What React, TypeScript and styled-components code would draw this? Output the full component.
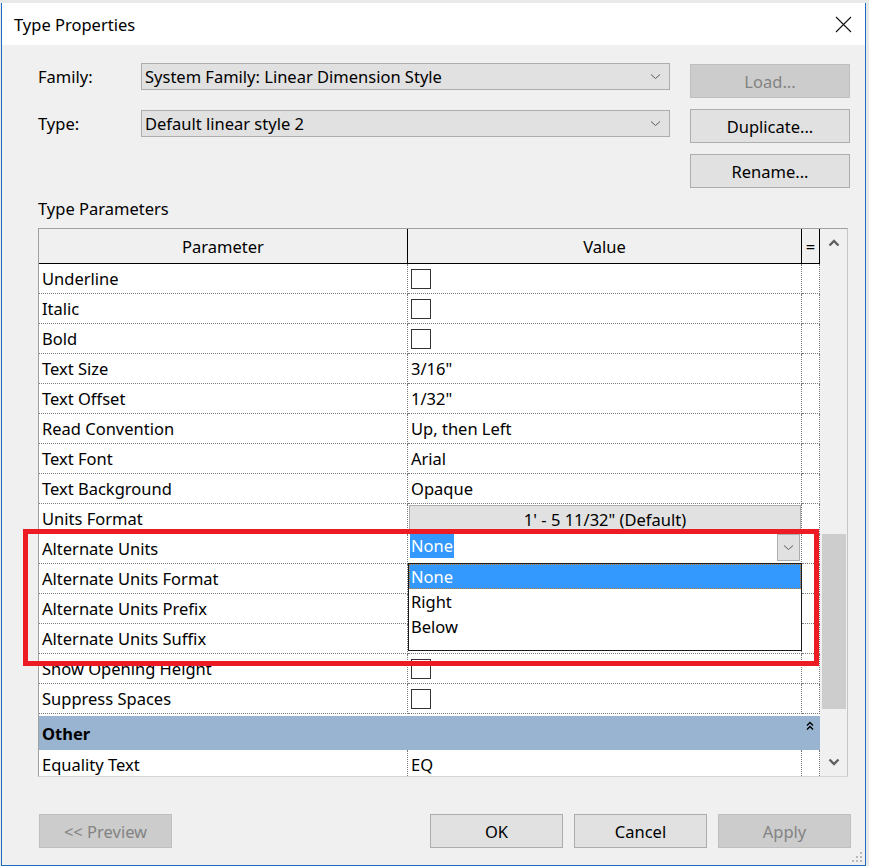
import React from "react";
import styled, { createGlobalStyle, css } from "styled-components";

const GlobalStyle = createGlobalStyle`
  html, body { margin: 0; padding: 0; background: #e9e9e9; }
  body { font-family: "Noto Sans", "Open Sans", sans-serif; font-size: 16.5px; color: #000; }
  * { box-sizing: border-box; }
`;

const Window = styled.div`
  position: relative;
  width: 865px;
  height: 863px;
  margin: 3px 0 0 1px;
  border: 1px solid #1f6dc2;
  border-top: none;
  background: #f0f0f0;
  display: flex;
  flex-direction: column;
`;

const TitleBar = styled.div`
  height: 42px;
  background: #fff;
  display: flex;
  align-items: center;
  justify-content: space-between;
  padding: 0 13px 0 12px;
`;

const Title = styled.span`
  font-size: 16.5px;
`;

const Body = styled.div`
  flex: 1;
  padding: 18px 14px 0 36px;
  display: flex;
  flex-direction: column;
`;

const TopArea = styled.div`
  display: flex;
  height: 125px;
`;

const LeftForm = styled.div`
  width: 632px;
  display: flex;
  flex-direction: column;
  gap: 20px;
`;

const FieldRow = styled.div`
  display: flex;
  align-items: center;
  height: 27px;
`;

const FieldLabel = styled.span`
  width: 103px;
`;

const Select = styled.div`
  width: 529px;
  height: 27px;
  border: 1px solid #adadad;
  background: #e1e1e1;
  display: flex;
  align-items: center;
  justify-content: space-between;
  padding: 0 8px 0 3px;
`;

const ButtonColumn = styled.div`
  margin-left: 20px;
  width: 160px;
  padding-top: 1px;
  display: flex;
  flex-direction: column;
  gap: 11px;
`;

const DialogButton = styled.div<{ $w: number; $disabled?: boolean }>`
  width: ${(p) => p.$w}px;
  height: 34px;
  border: 1px solid #adadad;
  background: #e1e1e1;
  display: flex;
  align-items: center;
  justify-content: center;
  ${(p) =>
    p.$disabled &&
    css`
      background: #cccccc;
      border-color: #bfbfbf;
      color: #838383;
    `}
`;

const SectionLabel = styled.div`
  margin-top: 9px;
  height: 23px;
  line-height: 23px;
`;

const Frame = styled.div`
  margin-top: 8px;
  width: 810px;
  height: 549px;
  border: 1px solid;
  border-color: #a0a0a0 #c6c6c6 #d6d6d6 #a0a0a0;
  display: flex;
`;

const GridArea = styled.div`
  width: 781px;
  display: flex;
  flex-direction: column;
  overflow: hidden;
  background: #fff;
`;

const columns = "369px 394px 18px";

const Header = styled.div`
  display: grid;
  grid-template-columns: ${columns};
  height: 35px;
  border-bottom: 1px solid #000;
  background: #f0f0f0;
`;

const HeaderCell = styled.div`
  border-right: 1px solid #000;
  display: flex;
  align-items: center;
  justify-content: center;
`;

const Rows = styled.div`
  position: relative;
  flex: 1;
  overflow: hidden;
  background: #fff;
`;

const Row = styled.div`
  display: grid;
  grid-template-columns: ${columns};
  height: 30px;
`;

const Cell = styled.div`
  position: relative;
  border-right: 1px dotted #7a7a7a;
  border-bottom: 1px dotted #7a7a7a;
  display: flex;
  align-items: center;
  padding-left: 3px;
  white-space: nowrap;
`;

const Checkbox = styled.div`
  width: 20px;
  height: 20px;
  border: 1px solid #333;
  background: #fff;
`;

const ValueButton = styled.div`
  flex: 1;
  align-self: stretch;
  margin: 1px 0 0 -2px;
  border: 1px solid #adadad;
  background: #e1e1e1;
  display: flex;
  align-items: center;
  justify-content: center;
`;

const ComboCell = styled(Cell)`
  align-items: flex-start;
  padding-left: 2px;
  overflow: visible;
  z-index: 2;
`;

const SelectedText = styled.span`
  height: 24px;
  line-height: 24px;
  padding: 0 1px;
  background: #3399ff;
  color: #fff;
`;

const ComboButton = styled.div`
  position: absolute;
  right: 1px;
  top: 0;
  width: 23px;
  height: 27px;
  border: 1px solid #adadad;
  background: #e1e1e1;
  display: flex;
  align-items: center;
  justify-content: center;
`;

const DropList = styled.div`
  position: absolute;
  left: 0;
  right: -1px;
  top: 100%;
  height: 88px;
  border: 1px solid #1a1a1a;
  background: #fff;
  display: flex;
  flex-direction: column;
`;

const DropItem = styled.div<{ $active?: boolean }>`
  height: 25px;
  display: flex;
  align-items: center;
  padding-left: 1px;
  border: 1px solid transparent;
  ${(p) =>
    p.$active &&
    css`
      background: #3399ff;
      color: #fff;
      border: 1px dotted #c77b2d;
    `}
`;

const GroupRow = styled.div`
  margin-top: 2px;
  height: 34px;
  background: #99b4d1;
  display: flex;
  align-items: center;
  justify-content: space-between;
  padding: 0 6px 0 3px;
  font-weight: bold;
`;

const GroupToggle = styled.svg`
  align-self: flex-start;
  margin-top: 5px;
`;

const Scrollbar = styled.div`
  width: 27px;
  background: #f0f0f0;
  display: flex;
  flex-direction: column;
`;

const ScrollArrow = styled.div`
  height: 28px;
  display: flex;
  align-items: center;
  justify-content: center;
`;

const Track = styled.div`
  flex: 1;
  display: flex;
  flex-direction: column;
`;

const Thumb = styled.div`
  margin: 0 1px 0 2px;
  background: #cdcdcd;
`;

const Footer = styled.div`
  margin-top: 37px;
  padding-left: 1px;
  display: flex;
`;

const FooterGroup = styled.div`
  margin-left: auto;
  display: flex;
  gap: 11px;
`;

const Annotation = styled.div`
  position: absolute;
  left: 21px;
  top: 526px;
  width: 796px;
  height: 137px;
  border: 5px solid #ed1c24;
  pointer-events: none;
`;

const Grip = styled.svg`
  position: absolute;
  right: 1px;
  bottom: 1px;
`;

const Chevron = ({ color = "#5a5a5a" }: { color?: string }) => (
  <svg width="11" height="7" viewBox="0 0 11 7">
    <path d="M1 1.5 L5.5 5.5 L10 1.5" fill="none" stroke={color} strokeWidth="1" />
  </svg>
);

const ScrollChevron = ({ up }: { up?: boolean }) => (
  <svg width="12" height="8" viewBox="0 0 12 8">
    <path
      d={up ? "M1.5 6.5 L6 2 L10.5 6.5" : "M1.5 1.5 L6 6 L10.5 1.5"}
      fill="none"
      stroke="#606060"
      strokeWidth="2.4"
    />
  </svg>
);

type RowData = { name: string; kind?: "check" | "button" | "combo"; value?: string };

const rows: RowData[] = [
  { name: "Underline", kind: "check" },
  { name: "Italic", kind: "check" },
  { name: "Bold", kind: "check" },
  { name: "Text Size", value: '3/16"' },
  { name: "Text Offset", value: '1/32"' },
  { name: "Read Convention", value: "Up, then Left" },
  { name: "Text Font", value: "Arial" },
  { name: "Text Background", value: "Opaque" },
  { name: "Units Format", kind: "button", value: `1' - 5 11/32" (Default)` },
  { name: "Alternate Units", kind: "combo", value: "None" },
  { name: "Alternate Units Format" },
  { name: "Alternate Units Prefix" },
  { name: "Alternate Units Suffix" },
  { name: "Show Opening Height", kind: "check" },
  { name: "Suppress Spaces", kind: "check" },
];

const renderValue = (r: RowData) => {
  if (r.kind === "check") return <Cell><Checkbox /></Cell>;
  if (r.kind === "button")
    return (
      <Cell>
        <ValueButton>{r.value}</ValueButton>
      </Cell>
    );
  if (r.kind === "combo")
    return (
      <ComboCell>
        <SelectedText>{r.value}</SelectedText>
        <ComboButton>
          <Chevron />
        </ComboButton>
        <DropList>
          <DropItem $active>None</DropItem>
          <DropItem>Right</DropItem>
          <DropItem>Below</DropItem>
        </DropList>
      </ComboCell>
    );
  return <Cell>{r.value}</Cell>;
};

const scroll = { offset: 277, size: 175 };

export default function App() {
  return (
    <>
      <GlobalStyle />
      <Window>
        <TitleBar>
          <Title>Type Properties</Title>
          <svg width="17" height="17" viewBox="0 0 17 17">
            <path d="M1 1 L16 16 M16 1 L1 16" stroke="#111" strokeWidth="1.1" />
          </svg>
        </TitleBar>
        <Body>
          <TopArea>
            <LeftForm>
              <FieldRow>
                <FieldLabel>Family:</FieldLabel>
                <Select>
                  <span>System Family: Linear Dimension Style</span>
                  <Chevron />
                </Select>
              </FieldRow>
              <FieldRow>
                <FieldLabel>Type:</FieldLabel>
                <Select>
                  <span>Default linear style 2</span>
                  <Chevron />
                </Select>
              </FieldRow>
            </LeftForm>
            <ButtonColumn>
              <DialogButton $w={160} $disabled>Load...</DialogButton>
              <DialogButton $w={160}>Duplicate...</DialogButton>
              <DialogButton $w={160}>Rename...</DialogButton>
            </ButtonColumn>
          </TopArea>
          <SectionLabel>Type Parameters</SectionLabel>
          <Frame>
            <GridArea>
              <Header>
                <HeaderCell>Parameter</HeaderCell>
                <HeaderCell>Value</HeaderCell>
                <HeaderCell>=</HeaderCell>
              </Header>
              <Rows>
                {rows.map((r) => (
                  <Row key={r.name}>
                    <Cell>{r.name}</Cell>
                    {renderValue(r)}
                    <Cell />
                  </Row>
                ))}
                <GroupRow>
                  <span>Other</span>
                  <GroupToggle width="8" height="10" viewBox="0 0 8 10">
                    <path d="M1 4.5 L4 1.5 L7 4.5 M1 8.5 L4 5.5 L7 8.5" fill="none" stroke="#000" strokeWidth="1.4" />
                  </GroupToggle>
                </GroupRow>
                <Row>
                  <Cell>Equality Text</Cell>
                  <Cell>EQ</Cell>
                  <Cell />
                </Row>
              </Rows>
            </GridArea>
            <Scrollbar>
              <ScrollArrow>
                <ScrollChevron up />
              </ScrollArrow>
              <Track>
                <Thumb style={{ marginTop: scroll.offset, height: scroll.size }} />
              </Track>
              <ScrollArrow>
                <ScrollChevron />
              </ScrollArrow>
            </Scrollbar>
          </Frame>
          <Footer>
            <DialogButton $w={133} $disabled>&lt;&lt; Preview</DialogButton>
            <FooterGroup>
              <DialogButton $w={133}>OK</DialogButton>
              <DialogButton $w={133}>Cancel</DialogButton>
              <DialogButton $w={133} $disabled>Apply</DialogButton>
            </FooterGroup>
          </Footer>
        </Body>
        <Annotation />
        <Grip width="12" height="12" viewBox="0 0 12 12">
          <g fill="#b8b8b8">
            <rect x="8" y="0" width="2" height="2" />
            <rect x="4" y="4" width="2" height="2" />
            <rect x="8" y="4" width="2" height="2" />
            <rect x="0" y="8" width="2" height="2" />
            <rect x="4" y="8" width="2" height="2" />
            <rect x="8" y="8" width="2" height="2" />
          </g>
        </Grip>
      </Window>
    </>
  );
}
